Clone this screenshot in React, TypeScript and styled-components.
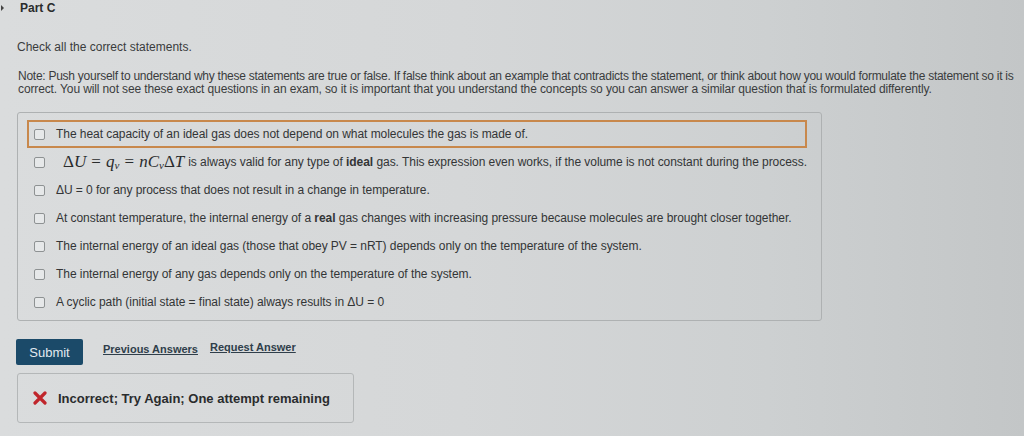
import React from "react";
import styled, { createGlobalStyle } from "styled-components";

const Global = createGlobalStyle`
  html, body { margin: 0; padding: 0; }
  body {
    width: 1024px; height: 436px; overflow: hidden;
    background: linear-gradient(90deg, #dadcdd 0%, #d5d7d8 45%, #cdd0d1 75%, #c3c6c7 100%);
    font-family: "Liberation Sans", Arial, sans-serif;
    color: #2b2d2e;
  }
`;

const Page = styled.div`
  position: relative;
  padding: 1px 0 0 17px;
  height: 435px;
  box-sizing: border-box;
`;

const Caret = styled.span`
  position: absolute;
  left: 1px;
  top: 5px;
  width: 0; height: 0;
  border-top: 3px solid transparent;
  border-bottom: 3px solid transparent;
  border-left: 3px solid #444;
`;

const PartTitle = styled.h2`
  margin: 0 0 0 3px;
  font-size: 12px;
  font-weight: bold;
  line-height: 14px;
  color: #2a2c2d;
`;

const Prompt = styled.p`
  margin: 25px 0 0 0;
  font-size: 12px;
  line-height: 14px;
  color: #3a3c3d;
`;

const Note = styled.p`
  margin: 16px 0 0 1px;
  font-size: 12px;
  line-height: 13px;
  white-space: nowrap;
  color: #3a3c3d;
`;

const NoteLine = styled.span<{ $tight?: boolean }>`
  display: block;
  letter-spacing: ${(p) => (p.$tight ? "-0.26px" : "-0.12px")};
`;

const AnswerBox = styled.div`
  margin-top: 16px;
  width: 805px;
  height: 209px;
  box-sizing: border-box;
  border: 1px solid #aeb1b2;
  border-radius: 3px;
  padding: 7px 14px 0 9px;
  display: flex;
  flex-direction: column;
`;

const Row = styled.label<{ $focused?: boolean }>`
  display: flex;
  align-items: center;
  height: 28px;
  box-sizing: border-box;
  padding-left: 5px;
  border: 2px solid ${(p) => (p.$focused ? "#c8884c" : "transparent")};
  font-size: 12px;
  color: #333536;
  white-space: nowrap;
  letter-spacing: -0.05px;
`;

const Box = styled.span`
  width: 11px;
  height: 11px;
  box-sizing: border-box;
  border: 1px solid #8e9293;
  border-radius: 2px;
  background: #e6e8e9;
  flex: none;
  margin-right: 11px;
`;

const Math = styled.span`
  font-family: "Liberation Serif", "Times New Roman", serif;
  font-style: italic;
  font-size: 17px;
  margin: 0 4px 0 7px;
  color: #2a2c2d;
  word-spacing: 1px;
  i { font-style: normal; }
  sub { font-size: 11px; vertical-align: -2px; line-height: 0; }
`;

const Actions = styled.div`
  display: flex;
  align-items: flex-start;
  margin-top: 18px;
`;

const SubmitButton = styled.button`
  width: 67px;
  height: 26px;
  border: none;
  border-radius: 2px;
  background: #1b4a69;
  color: #e3ebf0;
  font-family: "Liberation Sans", Arial, sans-serif;
  font-size: 13px;
  padding: 0;
  margin-left: -1px;
`;

const LinkText = styled.a`
  font-size: 11px;
  font-weight: bold;
  color: #2f3e4a;
  text-decoration: underline;
  margin-left: 20px;
  margin-top: 4px;
  & + & { margin-left: 12px; margin-top: 2px; }
`;

const Feedback = styled.div`
  margin-top: 8px;
  width: 337px;
  height: 50px;
  box-sizing: border-box;
  border: 1px solid #b4b7b8;
  border-radius: 3px;
  display: flex;
  align-items: center;
  padding-left: 15px;
  gap: 11px;
  font-size: 13px;
  font-weight: bold;
  color: #2a2c2d;
`;

const rows: React.ReactNode[] = [
  "The heat capacity of an ideal gas does not depend on what molecules the gas is made of.",
  <>
    <Math>
      <i>Δ</i>U <i>=</i> q<sub>v</sub> <i>=</i> nC<sub>v</sub><i>Δ</i>T
    </Math>
    is always valid for any type of&nbsp;<b>ideal</b>&nbsp;gas. This expression even works, if the volume is not constant during the process.
  </>,
  "ΔU = 0 for any process that does not result in a change in temperature.",
  <>
    At constant temperature, the internal energy of a&nbsp;<b>real</b>&nbsp;gas changes with increasing pressure because molecules are brought closer together.
  </>,
  "The internal energy of an ideal gas (those that obey PV =  nRT) depends only on the temperature of the system.",
  "The internal energy of any gas depends only on the temperature of the system.",
  "A cyclic path (initial state = final state) always results in ΔU = 0",
];

export default function App() {
  return (
    <>
      <Global />
      <Page>
        <Caret />
        <PartTitle>Part C</PartTitle>
        <Prompt>Check all the correct statements.</Prompt>
        <Note>
          <NoteLine $tight>
            Note: Push yourself to understand why these statements are true or false. If false think about an example that contradicts the statement, or think about how you would formulate the statement so it is
          </NoteLine>
          <NoteLine>
            correct. You will not see these exact questions in an exam, so it is important that you understand the concepts so you can answer a similar question that is formulated differently.
          </NoteLine>
        </Note>
        <AnswerBox>
          {rows.map((r, i) => (
            <Row key={i} $focused={i === 0}>
              <Box />
              {r}
            </Row>
          ))}
        </AnswerBox>
        <Actions>
          <SubmitButton>Submit</SubmitButton>
          <LinkText>Previous Answers</LinkText>
          <LinkText>Request Answer</LinkText>
        </Actions>
        <Feedback>
          <svg width="14" height="14" viewBox="0 0 14 14">
            <path d="M2 2 L12 12 M12 2 L2 12" stroke="#c0262c" strokeWidth="3.2" strokeLinecap="round" />
          </svg>
          Incorrect; Try Again; One attempt remaining
        </Feedback>
      </Page>
    </>
  );
}
